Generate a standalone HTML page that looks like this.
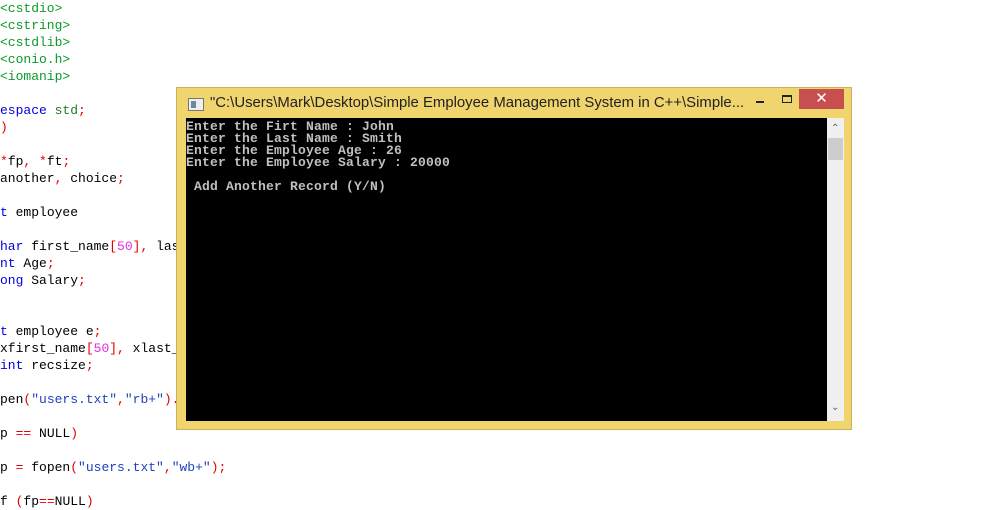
<!DOCTYPE html>
<html><head><meta charset="utf-8"><style>
body{margin:0;width:1001px;height:504px;background:#fff;overflow:hidden;position:relative;font-family:"Liberation Sans",sans-serif}
#code{position:absolute;left:0;top:0;font:13px/17px "Liberation Mono",monospace;color:#000;white-space:pre}
.g{color:#0a9a2a}.b{color:#0000e0}.r{color:#e00000}.m{color:#e030e0}.s{color:#2040c0}.gr{color:#208020}
#win{position:absolute;left:176px;top:87px;width:674px;height:341px;background:#f0d56e;border:1px solid #c9b25a}
#title{position:absolute;left:33px;top:7px;font-size:14.9px;color:#222;white-space:nowrap;width:540px;overflow:hidden}
#icon{position:absolute;left:11px;top:10px;width:14px;height:11px;border:1px solid #777;background:#eee}
#icon:before{content:"";position:absolute;left:2px;top:2px;width:5px;height:7px;background:#6a8a9a}
#close{position:absolute;left:622px;top:1px;width:45px;height:20px;background:#c74f4f;color:#fff;text-align:center;font-size:15px;line-height:20px}
#con{position:absolute;left:9px;top:30px;width:641px;height:303px;background:#000;font:bold 13px/12px "Liberation Mono",monospace;color:#c0c0c0;white-space:pre;letter-spacing:0.2px;box-sizing:border-box;padding-top:3px}
#sb{position:absolute;left:650px;top:30px;width:17px;height:303px;background:#f0f0f0}
#thumb{position:absolute;left:1px;top:20px;width:15px;height:22px;background:#cdcdcd}
</style></head><body>
<div id="code"><span class="g">&lt;cstdio&gt;</span>
<span class="g">&lt;cstring&gt;</span>
<span class="g">&lt;cstdlib&gt;</span>
<span class="g">&lt;conio.h&gt;</span>
<span class="g">&lt;iomanip&gt;</span>

<span class="b">espace</span> <span class="gr">std</span><span class="r">;</span>
<span class="r">)</span>

<span class="r">*</span>fp<span class="r">,</span> <span class="r">*</span>ft<span class="r">;</span>
another<span class="r">,</span> choice<span class="r">;</span>

<span class="b">t</span> employee

<span class="b">har</span> first_name<span class="r">[</span><span class="m">50</span><span class="r">],</span> las
<span class="b">nt</span> Age<span class="r">;</span>
<span class="b">ong</span> Salary<span class="r">;</span>


<span class="b">t</span> employee e<span class="r">;</span>
xfirst_name<span class="r">[</span><span class="m">50</span><span class="r">],</span> xlast_
<span class="b">int</span> recsize<span class="r">;</span>

pen<span class="r">(</span><span class="s">"users.txt"</span><span class="r">,</span><span class="s">"rb+"</span><span class="r">).</span>

p <span class="r">==</span> NULL<span class="r">)</span>

p <span class="r">=</span> fopen<span class="r">(</span><span class="s">"users.txt"</span><span class="r">,</span><span class="s">"wb+"</span><span class="r">);</span>

f <span class="r">(</span>fp<span class="r">==</span>NULL<span class="r">)</span></div>
<div id="win">
<div id="icon"></div>
<div id="title">"C:\Users\Mark\Desktop\Simple Employee Management System in C++\Simple...</div>
<div style="position:absolute;left:579px;top:13px;width:8px;height:2px;background:#222"></div>
<div style="position:absolute;left:605px;top:7px;width:8px;height:5px;border:1px solid #222;border-top-width:2px"></div>
<div id="close">✕</div>
<div id="con">Enter the Firt Name : John
Enter the Last Name : Smith
Enter the Employee Age : 26
Enter the Employee Salary : 20000

 Add Another Record (Y/N)</div>
<div id="sb"><div style="position:absolute;left:4px;top:5px;font-size:10px;color:#606060">⌃</div><div id="thumb"></div><div style="position:absolute;left:4px;top:284px;font-size:10px;color:#606060">⌄</div></div>
</div>
</body></html>
